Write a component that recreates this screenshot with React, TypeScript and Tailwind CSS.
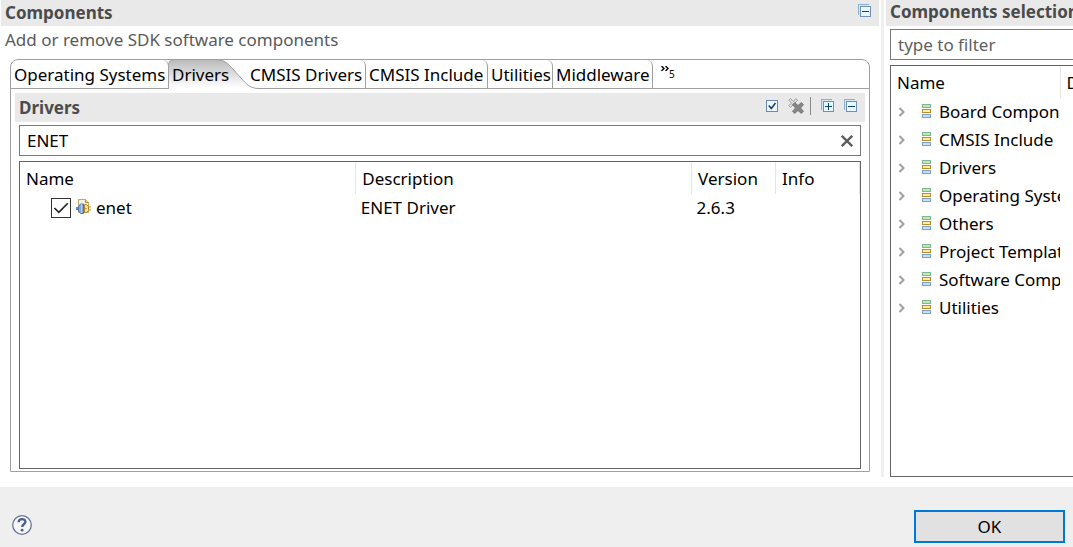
import React, { useState, ChangeEvent } from "react";

const categories = [
  "Board Components",
  "CMSIS Include",
  "Drivers",
  "Operating Systems",
  "Others",
  "Project Templates",
  "Software Components",
  "Utilities",
];

const tabs = [
  { name: "Operating Systems", width: "w-[158px]" },
  { name: "Drivers", width: "w-[78px]" },
  { name: "CMSIS Drivers", width: "w-[119px]" },
  { name: "CMSIS Include", width: "w-[122px]" },
  { name: "Utilities", width: "w-[65px]" },
  { name: "Middleware", width: "w-[100px]" },
];

const BoxIcon = ({ plus = false }: { plus?: boolean }) => (
  <svg width="13" height="13" viewBox="0 0 13 13" shapeRendering="crispEdges">
    <rect x="0" y="0" width="11" height="11" fill="#8db2cd" />
    <rect x="1" y="1" width="10" height="10" fill="#d3e9f5" />
    <rect x="2" y="2" width="11" height="11" fill="#7291b5" />
    <rect x="3" y="3" width="9" height="9" fill="#e6f7ff" />
    <rect x="4" y="7" width="7" height="1" fill="#0b4779" />
    {plus && <rect x="7" y="4" width="1" height="7" fill="#0b4779" />}
  </svg>
);

const CheckAllIcon = () => (
  <svg width="12" height="12" viewBox="0 0 12 12">
    <rect x="0.500" y="0.500" width="11" height="11" fill="#e9f6fd" stroke="#7088ae" />
    <path d="M2.800 5.500l2.500 3l4.200-5.500" fill="none" stroke="#1f3864" strokeWidth="1.500" />
  </svg>
);

const RemoveAllIcon = () => (
  <svg width="16" height="16" viewBox="0 0 16 16">
    <path
      d="M0.800 2.200l1.700-1.500l2.700 2.600l2.700-2.600l1.700 1.500l-2.600 2.800l2.600 2.800l-1.700 1.500l-2.700-2.600l-2.700 2.600l-1.700-1.500l2.600-2.800z"
      fill="#dedede"
      stroke="#999"
      strokeWidth="0.900"
    />
    <path
      d="M4.500 6.700l2.200-2.200l3.300 3l3.300-3l2.200 2.200l-3 3.300l3 3.300l-2.200 2.200l-3.300-3l-3.300 3l-2.200-2.200l3-3.300z"
      fill="#858585"
      stroke="#6d6d6d"
      strokeWidth="0.800"
    />
  </svg>
);

const GroupIcon = () => (
  <svg width="9" height="14" viewBox="0 0 9 14" shapeRendering="crispEdges" className="mb-[2px] shrink-0">
    <rect x="0" y="0" width="9" height="4" fill="#7ab79b" />
    <rect x="1" y="1" width="7" height="2" fill="#cde3a8" />
    <rect x="0" y="5" width="9" height="4" fill="#b98e2a" />
    <rect x="1" y="6" width="7" height="2" fill="#ffefad" />
    <rect x="0" y="10" width="9" height="4" fill="#809fcb" />
    <rect x="1" y="11" width="7" height="2" fill="#c4e0f5" />
  </svg>
);

const DriverIcon = () => (
  <svg width="15" height="16" viewBox="0 0 15 16" className="mb-[2px] shrink-0">
    <path d="M2.500 13.500v-13h7l3 3v10z" fill="#f5efe2" stroke="#c5a468" />
    <path d="M9.500 0.500v3h3" fill="#e9d9ac" stroke="#b88d3c" />
    <path d="M0 8h3v3h-3z" fill="#5d86bd" />
    <path d="M2.500 7.500l2-2.500h3v9.500h-3l-2-2.500z" fill="#84a9da" stroke="#4f76ad" />
    <path d="M5.500 5v9" stroke="#b5cdec" />
    <path d="M8.500 5.500h2l2 2v4l-2 2h-2z" fill="#f9e08a" stroke="#b5852b" />
    <path d="M12.500 8h2.500M12.500 11h2.500M8 9.500h2.500" stroke="#c48f2b" strokeWidth="1.200" />
  </svg>
);

const ActiveTabShape = () => (
  <svg width="92" height="30" viewBox="0 0 92 30" className="absolute -left-px -top-px z-10">
    <defs>
      <linearGradient id="tab" x1="0" y1="0" x2="0" y2="1">
        <stop offset="0" stopColor="#b9b9b9" />
        <stop offset="0.950" stopColor="#ffffff" />
      </linearGradient>
    </defs>
    <path
      d="M0.500 30V6.500Q0.500 0.500 6.500 0.500H48C58 0.500 62 7 68 13.500C77 23 80 29.500 91 29.500V30z"
      fill="url(#tab)"
    />
    <path
      d="M0.500 30V6.500Q0.500 0.500 6.500 0.500H48C58 0.500 62 7 68 13.500C77 23 80 29.500 91 29.500"
      fill="none"
      stroke="#a0a0a0"
    />
  </svg>
);

const ComponentTabs = () => {
  const [active, setActive] = useState<string>("Drivers");

  return (
    <div role="tablist" className="flex h-[29px]">
      {tabs.map(({ name, width }) => (
        <button
          key={name}
          role="tab"
          aria-selected={name === active}
          onClick={() => setActive(name)}
          className={`relative shrink-0 whitespace-nowrap border-b pl-[3px] pt-[2px] text-left ${width} ${
            name === active
              ? "border-transparent"
              : "rounded-tr-md border-r border-[#a0a0a0]"
          }`}
        >
          {name === active && <ActiveTabShape />}
          <span className="relative z-20">{name}</span>
        </button>
      ))}
      <button
        aria-label="Show more tabs"
        className="flex flex-1 border-b border-[#a0a0a0] pl-2 pt-[2px]"
      >
        <svg width="8" height="5" viewBox="0 0 8 5" className="mt-1">
          <path d="M0.500 0l2.500 2.500l-2.500 2.500M4.500 0l2.500 2.500l-2.500 2.500" fill="none" stroke="#000" strokeWidth="1.400" />
        </svg>
        <span className="mt-1 text-[10px] leading-4">5</span>
      </button>
    </div>
  );
};

const DriversSection = () => {
  const [filter, setFilter] = useState<string>("ENET");
  const [checked, setChecked] = useState<boolean>(true);

  const handleFilterChange = (e: ChangeEvent<HTMLInputElement>) => {
    setFilter(e.target.value);
  };

  return (
    <div className="flex flex-1 flex-col px-1 pb-[2px] pt-1">
      <div className="flex h-[29px] items-center bg-[#e9e9e9] px-1">
        <h2 className="flex-1 font-bold text-[#4b4b4b]">Drivers</h2>
        <div className="flex items-center gap-[10px] pb-1 pr-1">
          <button aria-label="Select all"><CheckAllIcon /></button>
          <button aria-label="Deselect all"><RemoveAllIcon /></button>
          <span className="-ml-1 h-[18px] w-px bg-[#8a8a8a]" />
          <button aria-label="Expand all"><BoxIcon plus /></button>
          <button aria-label="Collapse all"><BoxIcon /></button>
        </div>
      </div>
      <div className="mx-1 mt-[3px] flex h-[31px] shrink-0 items-center border border-[#7a7a7a]">
        <input
          aria-label="Filter drivers"
          value={filter}
          onChange={handleFilterChange}
          className="h-full min-w-0 flex-1 px-[7px] outline-none"
        />
        <button aria-label="Clear filter" className="mr-[7px]" onClick={() => setFilter("")}>
          <svg width="12" height="12" viewBox="0 0 12 12">
            <path d="M0.800 0.800l10.400 10.400M11.200 0.800l-10.400 10.400" stroke="#5c5c5c" strokeWidth="2.300" />
          </svg>
        </button>
      </div>
      <div className="mx-1 mt-[5px] flex-1 border border-[#646464]">
        <table className="w-full table-fixed text-left">
          <thead>
            <tr className="h-8 *:border-r *:border-[#e5e5e5] *:pl-[6px] *:pt-[2px] *:font-normal">
              <th className="w-2/5">Name</th>
              <th className="w-2/5">Description</th>
              <th className="w-1/10">Version</th>
              <th className="w-1/10">Info</th>
            </tr>
          </thead>
          <tbody>
            <tr className="h-7">
              <td className="pl-[31px]">
                <label className="flex items-center gap-[5px]">
                  <span className="relative size-5">
                    <input
                      type="checkbox"
                      checked={checked}
                      onChange={(e) => setChecked(e.target.checked)}
                      className="block size-5 appearance-none border border-[#333] bg-white"
                    />
                    {checked && (
                      <svg width="20" height="20" viewBox="0 0 20 20" className="pointer-events-none absolute inset-0">
                        <path d="M3.500 10l4.300 4.300l9-9" fill="none" stroke="#222" strokeWidth="1.600" />
                      </svg>
                    )}
                  </span>
                  <DriverIcon />
                  enet
                </label>
              </td>
              <td className="pl-[5px]">ENET Driver</td>
              <td className="pl-[5px]">2.6.3</td>
              <td></td>
            </tr>
          </tbody>
        </table>
      </div>
    </div>
  );
};

const ComponentsPanel = () => (
  <section className="flex min-w-0 flex-1 flex-col">
    <div className="ml-px flex h-[26px] items-center bg-[#e9e9e9] pl-1 pr-2">
      <h1 className="flex-1 font-bold text-[#4b4b4b]">Components</h1>
      <button aria-label="Collapse components" className="pb-[6px]"><BoxIcon /></button>
    </div>
    <p className="mt-[2px] h-[31px] pl-[5px] text-[#5a5a5a]">
      Add or remove SDK software components
    </p>
    <div className="mb-[5px] ml-[10px] mr-[9px] flex flex-1 flex-col rounded-t-lg border border-[#a0a0a0]">
      <ComponentTabs />
      <DriversSection />
    </div>
  </section>
);

const SelectionPanel = () => (
  <section className="w-[187px] shrink-0 overflow-hidden">
    <div className="flex h-full w-[320px] flex-col">
      <h1 className="h-[26px] bg-[#e9e9e9] pl-1 font-bold text-[#4b4b4b]">
        Components selection
      </h1>
      <input
        aria-label="Filter selection"
        placeholder="type to filter"
        className="ml-1 mt-[3px] h-[31px] border border-[#7a7a7a] px-[7px] outline-none placeholder:text-[#5f5f5f]"
      />
      <div className="ml-1 mt-[5px] flex-1 border border-[#646464]">
        <table className="w-full table-fixed text-left">
          <thead>
            <tr className="h-8 *:border-r *:border-[#e5e5e5] *:pl-[6px] *:pt-[2px] *:font-normal">
              <th className="w-[169px]">Name</th>
              <th>Dependencies</th>
            </tr>
          </thead>
          <tbody>
            {categories.map((category) => (
              <tr key={category} className="h-7">
                <td className="overflow-hidden whitespace-nowrap pl-[7px]">
                  <div className="flex items-center">
                    <button aria-label={`Expand ${category}`} className="mr-4">
                      <svg width="8" height="10" viewBox="0 0 8 10">
                        <path d="M1.500 1l4 4l-4 4" fill="none" stroke="#a0a0a0" strokeWidth="2" />
                      </svg>
                    </button>
                    <GroupIcon />
                    <span className="ml-2">{category}</span>
                  </div>
                </td>
                <td></td>
              </tr>
            ))}
          </tbody>
        </table>
      </div>
    </div>
  </section>
);

export default function App(): React.JSX.Element {
  return (
    <div className="flex min-h-screen flex-col overflow-hidden bg-white font-['Noto_Sans','Open_Sans',sans-serif] text-[17px] leading-6 text-black">
      <main className="flex flex-1 pb-[10px]">
        <ComponentsPanel />
        <div className="mx-[2px] w-[3px] bg-[#f0f0f0]" />
        <SelectionPanel />
      </main>
      <footer className="flex h-[60px] items-center justify-between bg-[#efefef] pl-3 pr-2 pt-[18px]">
        <button aria-label="Help" className="pb-[2px]">
          <svg width="20" height="20" viewBox="0 0 20 20">
            <circle cx="10" cy="10" r="9.300" fill="#f6f6f8" stroke="#66779b" strokeWidth="1.300" />
            <path d="M6.600 7.300c0-4.300 6.800-4.100 6.800-0.600c0 2.600-3.200 2.500-3.200 5.200" fill="none" stroke="#4a5f8c" strokeWidth="2.300" />
            <circle cx="10.100" cy="15.200" r="1.400" fill="#4a5f8c" />
          </svg>
        </button>
        <button className="h-[33px] w-[151px] border-2 border-[#0078d7] bg-[#e1e1e1] pt-[2px]">OK</button>
      </footer>
    </div>
  );
}
